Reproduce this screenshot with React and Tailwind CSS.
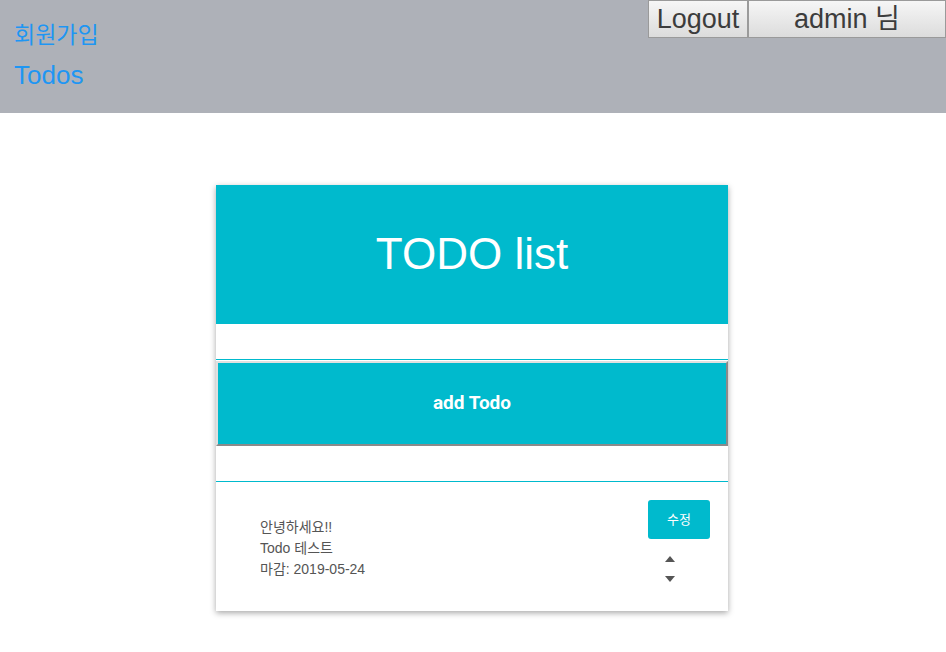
import React from "react";

const font = { fontFamily: '"Liberation Sans", Arial, "Noto Sans CJK KR", sans-serif' };

function TopButton({ children, className }) {
  return (
    <button
      className={`h-[38px] border border-[#9a9a9a] bg-gradient-to-b from-[#f6f6f6] to-[#dcdcdc] text-[27px] leading-none text-[#3c3c3c] ${className}`}
    >
      {children}
    </button>
  );
}

function TodoItem() {
  return (
    <div className="flex justify-between pl-[44px] pr-[18px] pt-[18px] pb-[14px] min-h-[129px]">
      <div className="flex flex-col justify-center text-[14px] leading-[21px] text-[#555]">
        <div>안녕하세요!!</div>
        <div>Todo 테스트</div>
        <div>마감: 2019-05-24</div>
      </div>
      <div className="flex flex-col items-start w-[62px]">
        <button className="w-[62px] h-[39px] rounded-[3px] bg-[#00bacd] text-white text-[13px]">
          수정
        </button>
        <div className="flex flex-col items-center gap-[14px] mt-[17px] ml-[17px]">
          <svg width="10" height="6" viewBox="0 0 10 6">
            <path d="M5 0 L10 6 L0 6 Z" fill="#555" />
          </svg>
          <svg width="10" height="6" viewBox="0 0 10 6">
            <path d="M0 0 L10 0 L5 6 Z" fill="#555" />
          </svg>
        </div>
      </div>
    </div>
  );
}

export default function App() {
  return (
    <div className="min-h-screen bg-white" style={font}>
      <header className="flex justify-between items-start bg-[#aeb1b8] h-[113px]">
        <nav className="flex flex-col pl-[14px] pt-[15px] leading-[40px] text-[#1e96f3]">
          <a className="text-[23px]">회원가입</a>
          <a className="text-[26px]">Todos</a>
        </nav>
        <div className="flex">
          <TopButton className="w-[100px]">Logout</TopButton>
          <TopButton className="w-[198px]">admin 님</TopButton>
        </div>
      </header>

      <main className="pt-[72px] pb-10 pr-[2px]">
        <div className="w-[512px] mx-auto bg-white shadow-[0_2px_6px_rgba(0,0,0,0.35)]">
          <div className="h-[139px] bg-[#00bacd] flex items-center justify-center">
            <h1 className="text-[44px] text-white leading-none pb-[2px]">TODO list</h1>
          </div>
          <div className="h-[35px]" />
          <div className="h-[1px] bg-[#00bacd]" />
          <div className="pt-[1px]">
            <button className="w-full h-[85px] bg-[#00bacd] border-2 border-t-[#e0e0e0] border-l-[#e0e0e0] border-b-[#8a8a8a] border-r-[#8a8a8a] text-white text-[19px] font-bold" style={{ fontFamily: 'Roboto, "Liberation Sans", sans-serif' }}>
              add Todo
            </button>
          </div>
          <div className="h-[35px]" />
          <div className="h-[1px] bg-[#00bacd]" />
          <TodoItem />
        </div>
      </main>
    </div>
  );
}
